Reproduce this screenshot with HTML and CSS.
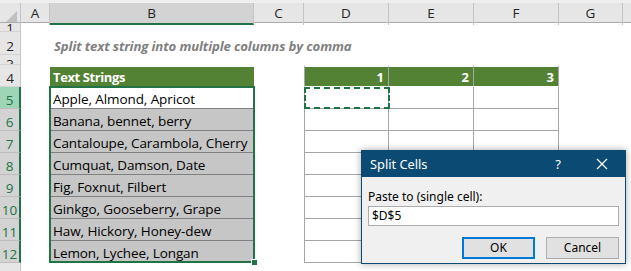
FILE: index.html
```html
<!DOCTYPE html>
<html>
<head>
<meta charset="utf-8">
<link rel="stylesheet" href="styles.css">
</head>
<body>
<div class="sheet">
  <div class="row hdr">
    <div class="corner"><span class="tri"></span></div>
    <div class="ch">A</div><div class="ch csel">B</div><div class="ch">C</div><div class="ch">D</div><div class="ch">E</div><div class="ch">F</div><div class="ch">G</div><div class="ch last"></div>
  </div>
  <div class="row r1">
    <div class="rh tiny">1</div><div></div><div></div><div></div><div></div><div></div><div></div><div></div><div></div>
  </div>
  <div class="row r2">
    <div class="rh">2</div><div></div><div class="title">Split text string into multiple columns by comma</div><div></div><div></div><div></div><div></div><div></div><div></div>
  </div>
  <div class="row r3">
    <div class="rh tiny">3</div><div></div><div></div><div></div><div></div><div></div><div></div><div></div><div></div>
  </div>
  <div class="row r4">
    <div class="rh">4</div><div></div><div class="gh">Text Strings</div><div></div><div class="gh num first">1</div><div class="gh num">2</div><div class="gh num">3</div><div></div><div></div>
  </div>
  <div class="row rr">
    <div class="rh sel act">5</div><div></div><div class="bc white">Apple, Almond, Apricot</div><div></div><div class="dc first"></div><div class="dc"></div><div class="dc"></div><div></div><div></div>
  </div>
  <div class="row rr">
    <div class="rh sel">6</div><div></div><div class="bc">Banana, bennet, berry</div><div></div><div class="dc first"></div><div class="dc"></div><div class="dc"></div><div></div><div></div>
  </div>
  <div class="row rr">
    <div class="rh sel">7</div><div></div><div class="bc">Cantaloupe, Carambola, Cherry</div><div></div><div class="dc first"></div><div class="dc"></div><div class="dc"></div><div></div><div></div>
  </div>
  <div class="row rr">
    <div class="rh sel">8</div><div></div><div class="bc">Cumquat, Damson, Date</div><div></div><div class="dc first"></div><div class="dc"></div><div class="dc"></div><div></div><div></div>
  </div>
  <div class="row rr">
    <div class="rh sel">9</div><div></div><div class="bc">Fig, Foxnut, Filbert</div><div></div><div class="dc first"></div><div class="dc"></div><div class="dc"></div><div></div><div></div>
  </div>
  <div class="row rr">
    <div class="rh sel">10</div><div></div><div class="bc">Ginkgo, Gooseberry, Grape</div><div></div><div class="dc first"></div><div class="dc"></div><div class="dc"></div><div></div><div></div>
  </div>
  <div class="row rr">
    <div class="rh sel">11</div><div></div><div class="bc">Haw, Hickory, Honey-dew</div><div></div><div class="dc first"></div><div class="dc"></div><div class="dc"></div><div></div><div></div>
  </div>
  <div class="row rr">
    <div class="rh sel">12</div><div></div><div class="bc">Lemon, Lychee, Longan</div><div></div><div class="dc first"></div><div class="dc"></div><div class="dc"></div><div></div><div></div>
  </div>
  <div class="row rr">
    <div class="rh">13</div><div></div><div></div><div></div><div></div><div></div><div></div><div></div><div></div>
  </div>

  <div class="selection"><span class="handle"></span></div>
  <div class="ants"></div>

  <div class="dialog">
    <div class="dtitle">
      <span class="dname">Split Cells</span>
      <span class="help">?</span>
      <svg class="close" width="12" height="12" viewBox="0 0 12 12"><path d="M1 1L11 11M11 1L1 11" stroke="#fff" stroke-width="1.2" fill="none"/></svg>
    </div>
    <div class="dbody">
      <div class="label">Paste to (single cell):</div>
      <div class="input">$D$5</div>
      <div class="buttons">
        <div class="btn ok">OK</div>
        <div class="btn">Cancel</div>
      </div>
    </div>
  </div>
</div>
</body>
</html>
```

FILE: styles.css
```css
* { box-sizing: border-box; }
body {
  margin: 0;
  background: #fff;
  font-family: "Open Sans", "Noto Sans", sans-serif;
  overflow: hidden;
}
.sheet {
  position: relative;
  width: 631px;
  height: 271px;
  overflow: hidden;
}
.row {
  display: grid;
  grid-template-columns: 21px 29px 204px 50px 85px 85px 85px 64px 1fr;
}
.hdr {
  height: 23px;
  background: #e6e6e6;
  border-top: 3px solid #efefef;
  border-bottom: 1px solid #ababab;
}
.corner {
  position: relative;
  border-right: 1px solid #c4c4c4;
}
.tri {
  position: absolute;
  right: 3px;
  bottom: 3px;
  width: 0;
  height: 0;
  border-left: 11px solid transparent;
  border-bottom: 11px solid #c0c0c0;
}
.ch {
  border-right: 1px solid #c4c4c4;
  text-align: center;
  font-size: 13.5px;
  line-height: 20px;
  color: #262626;
}
.ch.last { border-right: none; }
.ch.csel {
  background: #d3d3d3;
  border-bottom: 2px solid #217346;
  color: #1f1f1f;
}
.r1 { height: 9px; }
.r2 { height: 23px; }
.r3 { height: 10px; }
.r4 { height: 22px; }
.rr { height: 22px; }
.rh {
  background: #e6e6e6;
  border-right: 1px solid #c4c4c4;
  border-bottom: 1px solid #d2d2d2;
  font-size: 13.5px;
  color: #262626;
  display: flex;
  align-items: center;
  justify-content: center;
  padding-top: 5px;
  overflow: hidden;
}
.rh.tiny {
  padding-top: 0;
  line-height: 8px;
  align-items: flex-start;
}
.r1 .rh.tiny { padding-top: 1px; }
.r3 .rh.tiny { padding-top: 5px; }
.rh.sel {
  background: #d3d3d3;
  color: #217346;
  border-right: 2px solid #217346;
  border-bottom-color: #bebebe;
}
.rh.act { background: #9fd5b7; }
.title {
  grid-column: 3 / span 5;
  font-weight: bold;
  font-style: italic;
  color: #7f7f7f;
  font-size: 13.2px;
  line-height: 18px;
  padding-top: 5px;
  padding-left: 4px;
  white-space: nowrap;
  letter-spacing: -0.12px;
}
.gh {
  background: #548235;
  color: #fff;
  font-weight: bold;
  font-size: 13px;
  line-height: 18px;
  padding-top: 1px;
  padding-left: 3px;
  border-top: 2px solid #fff;
  border-bottom: 1px solid #fff;
  letter-spacing: -0.4px;
}
.gh.num {
  text-align: right;
  padding-right: 4px;
  border-right: 1px solid #a6a6a6;
  letter-spacing: 0;
}
.gh.num.first { border-left: 1px solid #a6a6a6; }
.bc {
  background: #c6c6c6;
  border-bottom: 1px solid #808080;
  font-size: 13.5px;
  line-height: 18px;
  padding-top: 3px;
  padding-left: 3px;
  color: #000;
  white-space: nowrap;
  letter-spacing: -0.1px;
}
.bc.white { background: #fff; }
.dc {
  border-right: 1px solid #a6a6a6;
  border-bottom: 1px solid #a6a6a6;
}
.dc.first { border-left: 1px solid #a6a6a6; }

.selection {
  position: absolute;
  left: 49px;
  top: 86px;
  width: 206px;
  height: 177px;
  border: 2px solid #217346;
}
.handle {
  position: absolute;
  right: -5px;
  bottom: -5px;
  width: 7px;
  height: 7px;
  background: #217346;
  border: 1px solid #fff;
}
.ants {
  position: absolute;
  left: 304px;
  top: 87px;
  width: 86px;
  height: 22px;
  border: 2px dashed #217346;
}

.dialog {
  position: absolute;
  left: 361px;
  top: 150px;
  width: 265px;
  height: 114px;
  background: #f0f0f0;
  border: 1px solid #0b4a72;
  box-shadow: 0 0 7px rgba(0, 0, 0, 0.35);
  font-family: "Noto Sans", "Open Sans", sans-serif;
}
.dtitle {
  height: 26px;
  background: #0b4a72;
  color: #fff;
  display: flex;
  align-items: center;
  padding-left: 8px;
  font-size: 12.8px;
}
.dname { flex: 1; }
.help {
  font-size: 13px;
  margin-right: 35px;
}
.close { margin-right: 17px; }
.dbody {
  padding: 11px 6px 0 6px;
}
.label {
  font-size: 12px;
  color: #000;
  line-height: 17px;
}
.input {
  margin-top: 1px;
  height: 20px;
  background: #fff;
  border: 1px solid #adadad;
  font-size: 12px;
  line-height: 18px;
  padding-left: 3px;
  color: #000;
}
.buttons {
  display: flex;
  justify-content: flex-end;
  gap: 11px;
  margin-top: 11px;
}
.btn {
  width: 73px;
  height: 22px;
  border: 1px solid #adadad;
  background: #e1e1e1;
  font-size: 12px;
  line-height: 20px;
  text-align: center;
  color: #000;
}
.btn.ok {
  border: 2px solid #0078d7;
  line-height: 18px;
}
```
